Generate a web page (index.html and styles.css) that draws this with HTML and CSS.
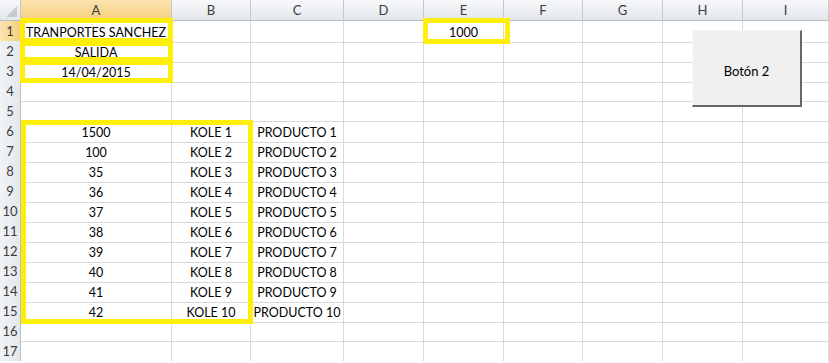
FILE: index.html
```html
<!DOCTYPE html>
<html>
<head>
  <meta charset="UTF-8">
  <title>Libro1 - Hoja1</title>
  <link rel="stylesheet" href="styles.css">
</head>
<body>
<div class="sheet">
  <div class="row head">
    <div class="corner"></div>
    <div class="col on">A</div><div class="col">B</div><div class="col">C</div><div class="col">D</div><div class="col">E</div>
    <div class="col">F</div><div class="col">G</div><div class="col">H</div><div class="col">I</div>
  </div>
  <div class="row"><div class="num on">1</div><div>TRANPORTES SANCHEZ</div><div></div><div></div><div></div><div>1000</div><div></div><div></div><div></div><div></div></div>
  <div class="row"><div class="num">2</div><div>SALIDA</div><div></div><div></div><div></div><div></div><div></div><div></div><div></div><div></div></div>
  <div class="row"><div class="num">3</div><div>14/04/2015</div><div></div><div></div><div></div><div></div><div></div><div></div><div></div><div></div></div>
  <div class="row"><div class="num">4</div><div></div><div></div><div></div><div></div><div></div><div></div><div></div><div></div><div></div></div>
  <div class="row"><div class="num">5</div><div></div><div></div><div></div><div></div><div></div><div></div><div></div><div></div><div></div></div>
  <div class="row"><div class="num">6</div><div>1500</div><div>KOLE 1</div><div>PRODUCTO 1</div><div></div><div></div><div></div><div></div><div></div><div></div></div>
  <div class="row"><div class="num">7</div><div>100</div><div>KOLE 2</div><div>PRODUCTO 2</div><div></div><div></div><div></div><div></div><div></div><div></div></div>
  <div class="row"><div class="num">8</div><div>35</div><div>KOLE 3</div><div>PRODUCTO 3</div><div></div><div></div><div></div><div></div><div></div><div></div></div>
  <div class="row"><div class="num">9</div><div>36</div><div>KOLE 4</div><div>PRODUCTO 4</div><div></div><div></div><div></div><div></div><div></div><div></div></div>
  <div class="row"><div class="num">10</div><div>37</div><div>KOLE 5</div><div>PRODUCTO 5</div><div></div><div></div><div></div><div></div><div></div><div></div></div>
  <div class="row"><div class="num">11</div><div>38</div><div>KOLE 6</div><div>PRODUCTO 6</div><div></div><div></div><div></div><div></div><div></div><div></div></div>
  <div class="row"><div class="num">12</div><div>39</div><div>KOLE 7</div><div>PRODUCTO 7</div><div></div><div></div><div></div><div></div><div></div><div></div></div>
  <div class="row"><div class="num">13</div><div>40</div><div>KOLE 8</div><div>PRODUCTO 8</div><div></div><div></div><div></div><div></div><div></div><div></div></div>
  <div class="row"><div class="num">14</div><div>41</div><div>KOLE 9</div><div>PRODUCTO 9</div><div></div><div></div><div></div><div></div><div></div><div></div></div>
  <div class="row"><div class="num">15</div><div>42</div><div>KOLE 10</div><div>PRODUCTO 10</div><div></div><div></div><div></div><div></div><div></div><div></div></div>
  <div class="row"><div class="num">16</div><div></div><div></div><div></div><div></div><div></div><div></div><div></div><div></div><div></div></div>
  <div class="row"><div class="num">17</div><div></div><div></div><div></div><div></div><div></div><div></div><div></div><div></div><div></div></div>

  <!-- marcos amarillos sobre las celdas -->
  <div class="mark m-a1"></div>
  <div class="mark m-a2"></div>
  <div class="mark m-a3"></div>
  <div class="mark m-e1"></div>
  <div class="mark m-list"></div>

  <div class="btn">Botón 2</div>
</div>
</body>
</html>
```

FILE: styles.css
```css
*{margin:0;padding:0;box-sizing:border-box;}
body{background:#fff;overflow:hidden;font-family:Lato,"Liberation Sans",sans-serif;font-size:12.5px;color:#000;}
.sheet{position:relative;width:829px;}
.row{display:grid;grid-template-columns:21px 151px 79px 93px 80px 80px 79px 80px 80px 86px;height:20px;}
.row>div{border-right:1px solid #d9d9d9;border-bottom:1px solid #d9d9d9;text-align:center;line-height:19px;padding-top:2px;white-space:nowrap;}
.row.head{height:21px;}
.row.head>div{background:linear-gradient(#f7f8fa,#e3e7ec);border-right:1px solid #c5cad2;border-bottom:1px solid #b9bec7;color:#3c3c3c;padding-top:0;line-height:20px;font-size:13px;}
.row.head>div.on{background:linear-gradient(#fbe3b0,#f6cf7e);border-bottom-color:#c9a45a;}
.row.head>.corner{position:relative;}
.corner:after{content:"";position:absolute;right:3px;bottom:3px;border-left:11px solid transparent;border-bottom:11px solid #c6cbd3;}
.row>.num{background:linear-gradient(90deg,#f1f3f6,#e4e8ed);border-right:1px solid #b9bec7;border-bottom:1px solid #c5cad2;color:#3c3c3c;padding-top:1px;font-size:13px;}
.row>.num.on{background:linear-gradient(90deg,#fbe3b0,#f6cf7e);}

.mark{position:absolute;border:5px solid #fdee0b;}
.m-a1{left:20px;top:18px;width:153px;height:25px;}
.m-a2{left:20px;top:41px;width:153px;height:21px;}
.m-a3{left:20px;top:60px;width:153px;height:23px;}
.m-e1{left:423px;top:18px;width:87px;height:26px;}
.m-list{left:21px;top:120px;width:232px;height:204px;}

.btn{position:absolute;left:692px;top:30px;width:110px;height:77px;background:#efefef;border-top:1px solid #f6f6f6;border-left:1px solid #f6f6f6;border-right:2px solid #676767;border-bottom:2px solid #676767;display:flex;align-items:center;justify-content:center;padding-top:6px;font-size:13px;}
```
